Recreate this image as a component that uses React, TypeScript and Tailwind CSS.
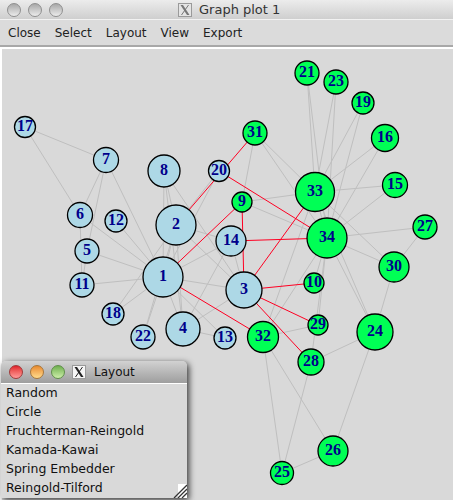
import React from 'react';

type Node = { id: number; x: number; y: number; r: number };

const nodes: Node[] = [
  { id: 1, x: 163, y: 277, r: 20 },
  { id: 2, x: 176, y: 225, r: 20 },
  { id: 3, x: 244, y: 290, r: 18 },
  { id: 4, x: 183, y: 329, r: 17 },
  { id: 5, x: 87, y: 251, r: 12 },
  { id: 6, x: 80, y: 215, r: 12.5 },
  { id: 7, x: 106, y: 160, r: 12.5 },
  { id: 8, x: 164, y: 171, r: 16 },
  { id: 9, x: 242, y: 202, r: 10 },
  { id: 10, x: 314, y: 283, r: 10 },
  { id: 11, x: 82, y: 285, r: 12 },
  { id: 12, x: 116, y: 221, r: 11 },
  { id: 13, x: 225, y: 338, r: 11 },
  { id: 14, x: 231, y: 241, r: 15 },
  { id: 15, x: 395, y: 185, r: 12.5 },
  { id: 16, x: 385, y: 138, r: 13.5 },
  { id: 17, x: 25, y: 127, r: 10.5 },
  { id: 18, x: 113, y: 314, r: 11 },
  { id: 19, x: 363, y: 103, r: 11 },
  { id: 20, x: 219, y: 171, r: 10.5 },
  { id: 21, x: 307, y: 73, r: 12 },
  { id: 22, x: 143, y: 337, r: 12 },
  { id: 23, x: 336, y: 82, r: 12 },
  { id: 24, x: 375, y: 332, r: 18 },
  { id: 25, x: 282, y: 473, r: 11.5 },
  { id: 26, x: 333, y: 451, r: 15 },
  { id: 27, x: 425, y: 227, r: 12 },
  { id: 28, x: 311, y: 362, r: 13 },
  { id: 29, x: 318, y: 325, r: 10 },
  { id: 30, x: 394, y: 267, r: 15 },
  { id: 31, x: 255, y: 133, r: 12 },
  { id: 32, x: 263, y: 337, r: 15.5 },
  { id: 33, x: 315, y: 192, r: 19.5 },
  { id: 34, x: 327, y: 238, r: 20 },
];

const greenIds = [10, 15, 16, 19, 21, 23, 24, 25, 26, 27, 28, 29, 30, 31, 32, 33, 34, 9];

const edges: [number, number][] = [
  [1, 2], [1, 3], [1, 4], [1, 5], [1, 6], [1, 7], [1, 8], [1, 9], [1, 11], [1, 12], [1, 13], [1, 14], [1, 18], [1, 20], [1, 22], [1, 32],
  [2, 3], [2, 4], [2, 8], [2, 14], [2, 18], [2, 20], [2, 22], [2, 31],
  [3, 4], [3, 8], [3, 9], [3, 10], [3, 14], [3, 28], [3, 29], [3, 33],
  [4, 8], [4, 13], [4, 14], [5, 7], [5, 11], [6, 7], [6, 11], [6, 17], [7, 17],
  [9, 31], [9, 33], [9, 34], [10, 34], [14, 34], [15, 33], [15, 34], [16, 33], [16, 34],
  [19, 33], [19, 34], [20, 34], [21, 33], [21, 34], [23, 33], [23, 34],
  [24, 26], [24, 28], [24, 30], [24, 33], [24, 34], [25, 26], [25, 28], [25, 32], [26, 32],
  [27, 30], [27, 34], [28, 34], [29, 32], [29, 34], [30, 33], [30, 34], [31, 33], [31, 34],
  [32, 33], [32, 34], [33, 34],
];

const byId = (id: number) => nodes.find((n) => n.id === id)!;
const isGreen = (id: number) => greenIds.includes(id);
// edges between the two groups are the red ones
const isRed = (a: number, b: number) => isGreen(a) !== isGreen(b);

function XIcon({ faded }: { faded?: boolean }) {
  const ink = faded ? '#777' : '#222';
  return (
    <svg width="14" height="14" viewBox="0 0 14 14" className="shrink-0">
      <rect x="0.5" y="0.5" width="13" height="13" fill={faded ? '#e4e4e4' : '#f6f6f6'} stroke="#9a9a9a" />
      <path d="M10.5 2 L3.5 12" stroke={ink} strokeWidth="1" />
      <path d="M2.5 2 L5 2 L11.5 12 L9 12 Z" fill={ink} />
    </svg>
  );
}

function Dot({ className }: { className: string }) {
  return <div className={`w-[14px] h-[14px] rounded-full shrink-0 ${className}`} />;
}

const layouts = ['Random', 'Circle', 'Fruchterman-Reingold', 'Kamada-Kawai', 'Spring Embedder', 'Reingold-Tilford'];
const menus = ['Close', 'Select', 'Layout', 'View', 'Export'];

export default function App() {
  return (
    <div className="relative w-[453px] h-[500px] overflow-hidden bg-[#d9d9d9] flex flex-col font-['DejaVu_Sans',sans-serif] text-[12px] text-[#222]">
      {/* Title bar */}
      <div className="h-[19px] shrink-0 flex items-center bg-gradient-to-b from-[#ececec] to-[#cfcfcf]">
        <div className="flex gap-[7px] pl-[7px]">
          <Dot className="border border-[#8f8f8f] bg-gradient-to-b from-[#a8a8a8] to-[#ececec]" />
          <Dot className="border border-[#8f8f8f] bg-gradient-to-b from-[#a8a8a8] to-[#ececec]" />
          <Dot className="border border-[#8f8f8f] bg-gradient-to-b from-[#a8a8a8] to-[#ececec]" />
        </div>
        <div className="flex items-center gap-[7px] ml-[115px]">
          <XIcon faded />
          <span className="text-[13px] text-[#333]">Graph plot 1</span>
        </div>
      </div>

      {/* Menu bar */}
      <div className="h-[28px] shrink-0 flex items-center gap-[14px] pl-[8px] border-t border-[#f2f2f2] border-b-2 border-b-[#a8a8a8] bg-[#dbdbdb]">
        {menus.map((m) => (
          <span key={m}>{m}</span>
        ))}
      </div>

      {/* Graph canvas */}
      <div className="relative flex-1 border-l-2 border-t-2 border-white">
        <svg width="453" height="500" viewBox="0 0 453 500" className="absolute left-[-2px] top-[-49px]">
          {edges
            .filter(([a, b]) => !isRed(a, b))
            .map(([a, b]) => (
              <line key={`${a}-${b}`} x1={byId(a).x} y1={byId(a).y} x2={byId(b).x} y2={byId(b).y} stroke="#bfbfbf" strokeWidth="1" />
            ))}
          {edges
            .filter(([a, b]) => isRed(a, b))
            .map(([a, b]) => (
              <line key={`${a}-${b}`} x1={byId(a).x} y1={byId(a).y} x2={byId(b).x} y2={byId(b).y} stroke="#ff0022" strokeWidth="1" />
            ))}
          {nodes.map((n) => (
            <g key={n.id}>
              <circle cx={n.x} cy={n.y} r={n.r} fill={isGreen(n.id) ? '#00ff55' : '#add8e6'} stroke="#000" strokeWidth="1.3" />
              <text
                x={n.x}
                y={n.y + 4}
                textAnchor="middle"
                fontFamily="'Liberation Serif', serif"
                fontWeight="bold"
                fontSize="16"
                fill="#00008b"
              >
                {n.id}
              </text>
            </g>
          ))}
        </svg>
      </div>

      {/* Floating layout window */}
      <div className="absolute left-[1px] top-[361px] w-[186px] h-[137px] rounded-t-[5px] bg-[#d9d9d9] shadow-[2px_2px_6px_rgba(0,0,0,0.75)] flex flex-col">
        <div className="h-[23px] shrink-0 flex items-center rounded-t-[5px] border-b border-white bg-gradient-to-b from-[#d2d2d2] to-[#9e9e9e]">
          <div className="flex gap-[7px] pl-[8px]">
            <Dot className="border border-[#a03a3a] bg-gradient-to-b from-[#e01a2a] to-[#ff9a9a]" />
            <Dot className="border border-[#a8763a] bg-gradient-to-b from-[#e88a2c] to-[#ffdc8c]" />
            <Dot className="border border-[#5f8f4a] bg-gradient-to-b from-[#6fb04f] to-[#cdeeaa]" />
          </div>
          <div className="ml-[7px] flex items-center gap-[8px]">
            <XIcon />
            <span className="text-[#111]">Layout</span>
          </div>
        </div>
        <div className="-mt-px flex flex-col pl-[5px] text-[12.5px] leading-[19px] text-[#111]">
          {layouts.map((l) => (
            <span key={l}>{l}</span>
          ))}
        </div>
        <svg width="14" height="14" viewBox="0 0 14 14" className="absolute right-0 bottom-0">
          <rect x="5" width="9" height="14" fill="#fff" />
          <path d="M1 14 L14 1 M5 14 L14 5 M9 14 L14 9" stroke="#333" strokeWidth="1.3" />
        </svg>
      </div>
    </div>
  );
}
